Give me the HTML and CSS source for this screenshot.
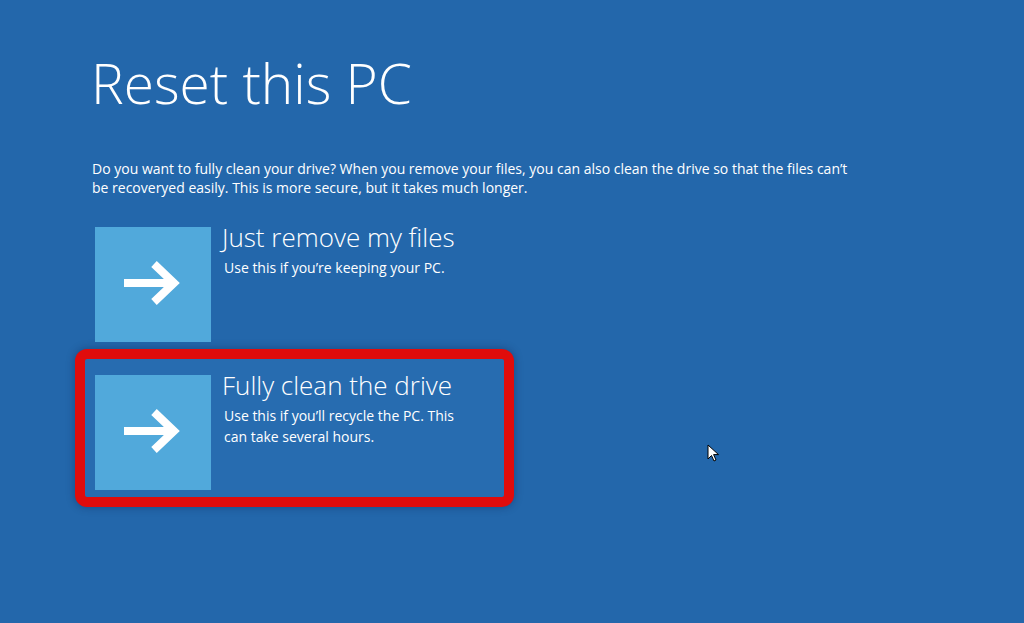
FILE: index.html
```html
<!DOCTYPE html>
<html>
  <head>
    <title>Reset this PC</title>
    <link rel="stylesheet" href="styles.css">
  </head>
  <body>
    <div class="page">
      <h1 class="title">Reset this PC</h1>

      <p class="intro">
        Do you want to fully clean your drive? When you remove your files, you can also clean the drive so that the files can’t
        be recoveryed easily. This is more secure, but it takes much longer.
      </p>

      <div class="options">
        <div class="option">
          <div class="option-tile">
            <svg class="option-arrow" width="116" height="115" viewBox="0 0 116 115">
              <line x1="29" y1="56" x2="80" y2="56" stroke="white" stroke-width="8"/>
              <polyline points="59,37 79,56 59,75" fill="none" stroke="white" stroke-width="8" stroke-linejoin="miter"/>
            </svg>
          </div>
          <div class="option-text">
            <p class="option-title">Just remove my files</p>
            <p class="option-desc">Use this if you’re keeping your PC.</p>
          </div>
        </div>

        <div class="option option-selected">
          <div class="option-tile">
            <svg class="option-arrow" width="116" height="115" viewBox="0 0 116 115">
              <line x1="29" y1="56" x2="80" y2="56" stroke="white" stroke-width="8"/>
              <polyline points="59,37 79,56 59,75" fill="none" stroke="white" stroke-width="8" stroke-linejoin="miter"/>
            </svg>
          </div>
          <div class="option-text">
            <p class="option-title">Fully clean the drive</p>
            <p class="option-desc">Use this if you’ll recycle the PC. This can take several hours.</p>
          </div>
        </div>
      </div>
    </div>

    <svg class="cursor" width="14" height="20" viewBox="0 0 14 20">
      <path d="M1 1 L1 15 L4.5 11.5 L7 17 L9 16 L6.6 10.6 L11.5 10.6 Z" fill="white" stroke="black" stroke-width="1" stroke-linejoin="round"/>
    </svg>
  </body>
</html>
```

FILE: styles.css
```css
body {
  margin: 0;
  background-color: rgb(35, 103, 171);
  color: white;
  font-family: "Open Sans", "Segoe UI", sans-serif;
  height: 623px;
  overflow: hidden;
}

.page {
  padding-left: 92px;
  padding-top: 48px;
}

.title {
  font-size: 55px;
  font-weight: 300;
  line-height: 70px;
  margin: 0 0 0 -1px;
}

.intro {
  font-size: 14px;
  line-height: 19px;
  width: 765px;
  margin: 41px 0 0 0;
}

.options {
  margin-top: 30px;
  margin-left: 3px;
}

.option {
  display: flex;
  gap: 11px;
}

.option-tile {
  width: 116px;
  height: 115px;
  background-color: rgb(81, 169, 219);
  flex-shrink: 0;
}

.option-arrow {
  display: block;
}

.option-text {
  width: 240px;
}

.option-title {
  font-size: 26px;
  font-weight: 300;
  line-height: 28px;
  margin: -4px 0 0 0;
}

.option-desc {
  font-size: 14px;
  line-height: 21px;
  margin: 6px 0 0 2px;
}

.option-selected {
  box-sizing: border-box;
  width: 439px;
  margin: 7px 0 0 -20px;
  padding: 16px 10px 7px 10px;
  border: 10px solid rgb(224, 12, 12);
  border-radius: 12px;
  background-color: rgb(39, 108, 176);
  box-shadow: 0 0 8px rgba(0, 20, 60, 0.35);
}

.cursor {
  position: absolute;
  left: 707px;
  top: 444px;
}
```
